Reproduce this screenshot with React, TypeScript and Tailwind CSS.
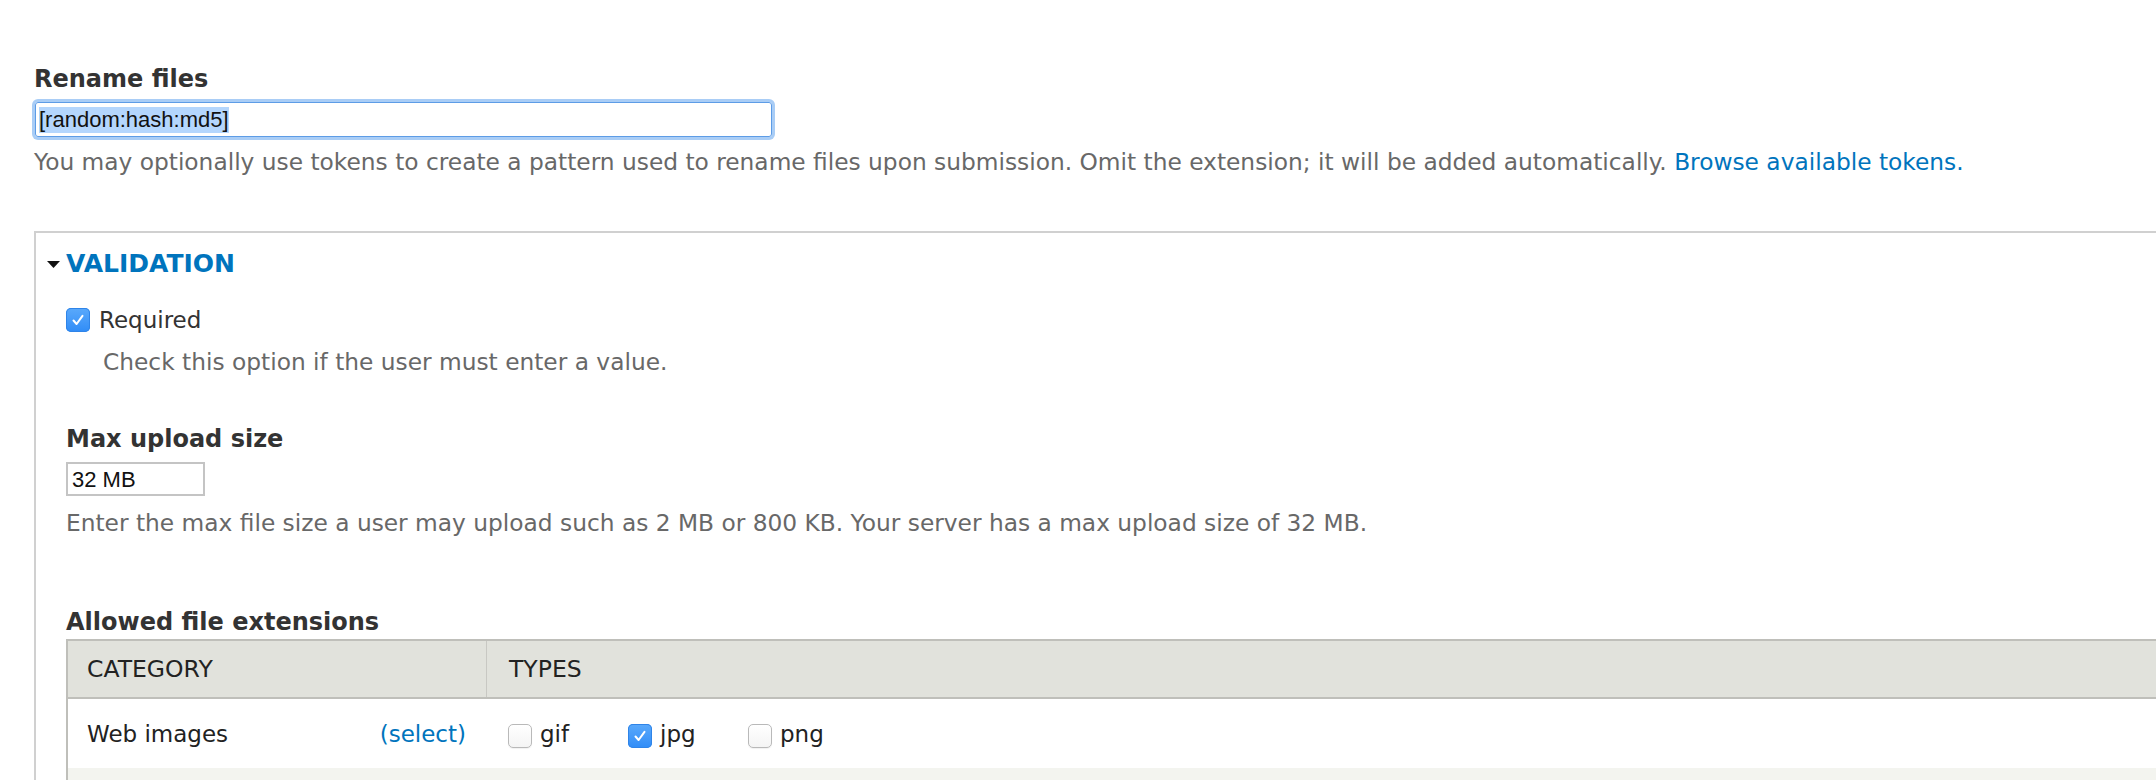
import React from 'react';

// Mac-style checkbox, checked state is the blue rounded square with a white tick
function Check({ checked }: { checked?: boolean }) {
  if (checked) {
    return (
      <span className="flex h-[24px] w-[24px] shrink-0 items-center justify-center rounded-[5px] bg-gradient-to-b from-[#5aa9fb] to-[#2f8cf7] shadow-[inset_0_0_0_1px_#2f84e8]">
        <svg width="14" height="14" viewBox="0 0 14 14" fill="none">
          <path d="M2.5 7.5 L5.6 11 L11.5 2.8" stroke="#fff" strokeWidth="2" strokeLinecap="round" strokeLinejoin="round" />
        </svg>
      </span>
    );
  }
  return (
    <span className="h-[24px] w-[24px] shrink-0 rounded-[5px] border border-[#b9b9b9] bg-gradient-to-b from-white to-[#f4f4f4] shadow-[0_1px_1px_rgba(0,0,0,0.06)]" />
  );
}

const types = [
  { name: 'gif', checked: false },
  { name: 'jpg', checked: true },
  { name: 'png', checked: false },
];

export default function App() {
  return (
    <div className="h-[780px] w-full overflow-hidden bg-white font-['DejaVu_Sans',sans-serif] text-[#333]">
      {/* Rename files */}
      <div className="pl-[34px] pt-[65px]">
        <div className="text-[24px] font-bold leading-[28px] text-[#333]">Rename files</div>
        <div className="mt-[9px] ml-[1px] flex h-[35px] w-[737px] items-center rounded-[3px] border border-[#5d9ce6] pl-[3px] shadow-[0_0_0_3px_#a9cdf6] font-['Liberation_Sans',sans-serif] text-[22px] text-[#111]">
          <span className="bg-[#b4d6fd] leading-[26px]">[random:hash:md5]</span>
        </div>
        <p className="mt-[11px] text-[23.3px] leading-[28px] text-[#686868]">
          You may optionally use tokens to create a pattern used to rename files upon submission. Omit the extension; it will be added automatically.{' '}
          <a className="text-[#0074bd]">Browse available tokens.</a>
        </p>
      </div>

      {/* Validation details */}
      <div className="ml-[34px] mt-[55px] w-[2300px] border-l-2 border-t-2 border-[#d0d0d0] pt-[15px]">
        <div className="flex items-center pl-[11px]">
          <svg width="13" height="8" viewBox="0 0 13 8" className="mr-[6px] mt-[2px]">
            <polygon points="0,0 13,0 6.5,7" fill="#111" />
          </svg>
          <span className="text-[25px] font-bold leading-[32px] text-[#0074bd]">VALIDATION</span>
        </div>

        <div className="pl-[30px]">
          <div className="mt-[26px] flex items-center gap-[9px]">
            <Check checked />
            <span className="text-[23px] leading-[28px] text-[#333]">Required</span>
          </div>
          <p className="ml-[37px] mt-[14px] text-[23.3px] leading-[28px] text-[#686868]">
            Check this option if the user must enter a value.
          </p>

          <div className="mt-[49px] text-[24px] font-bold leading-[28px] text-[#333]">Max upload size</div>
          <div className="mt-[9px] flex h-[34px] w-[139px] items-center border-2 border-[#c4c4c4] pl-[4px] font-['Liberation_Sans',sans-serif] text-[22px] text-[#111]">
            32 MB
          </div>
          <p className="mt-[13px] text-[23.3px] leading-[28px] text-[#686868]">
            Enter the max file size a user may upload such as 2 MB or 800 KB. Your server has a max upload size of 32 MB.
          </p>

          <div className="mt-[71px] text-[24px] font-bold leading-[28px] text-[#333]">Allowed file extensions</div>
          <div className="mt-[3px] border-l-2 border-t-2 border-[#bfbfba]">
            <div className="flex border-b-2 border-[#bfbfba] bg-[#e1e2dc] text-[23.5px] leading-[28px] text-[#222]">
              <div className="w-[419px] border-r border-[#c8c8c3] py-[14px] pl-[19px]">CATEGORY</div>
              <div className="py-[14px] pl-[22px]">TYPES</div>
            </div>
            <div className="flex h-[69px] items-center bg-white text-[23px] leading-[28px] text-[#222]">
              <div className="flex w-[420px] items-center justify-between pl-[19px] pr-[22px]">
                <span>Web images</span>
                <a className="text-[#0074bd]">(select)</a>
              </div>
              <div className="flex items-center pl-[20px] pt-[4px]">
                {types.map(t => (
                  <label key={t.name} className="flex w-[120px] items-center gap-[8px]">
                    <Check checked={t.checked} />
                    <span className="-mt-[4px]">{t.name}</span>
                  </label>
                ))}
              </div>
            </div>
            <div className="h-[40px] bg-[#f3f4ef]" />
          </div>
        </div>
      </div>
    </div>
  );
}
